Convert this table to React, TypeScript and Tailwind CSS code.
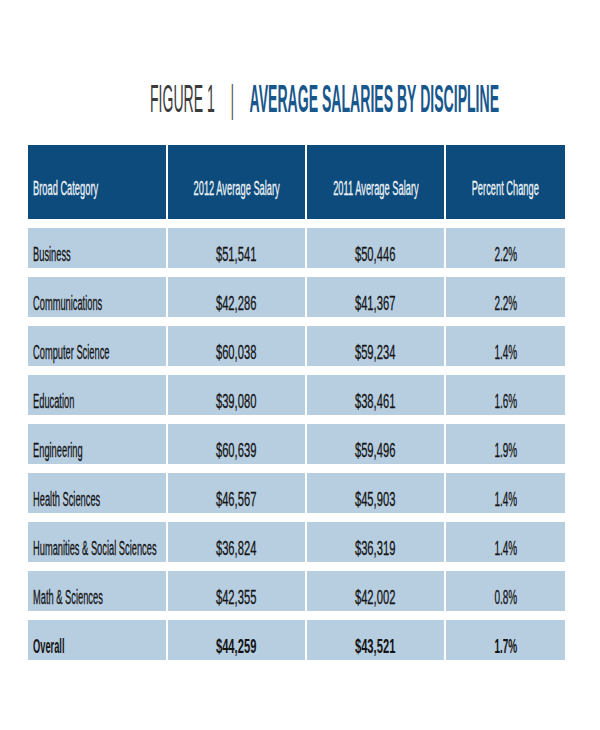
import React from 'react';

type Row = { category: string; y2012: string; y2011: string; change: string };

const rows: Row[] = [
  { category: 'Business', y2012: '$51,541', y2011: '$50,446', change: '2.2%' },
  { category: 'Communications', y2012: '$42,286', y2011: '$41,367', change: '2.2%' },
  { category: 'Computer Science', y2012: '$60,038', y2011: '$59,234', change: '1.4%' },
  { category: 'Education', y2012: '$39,080', y2011: '$38,461', change: '1.6%' },
  { category: 'Engineering', y2012: '$60,639', y2011: '$59,496', change: '1.9%' },
  { category: 'Health Sciences', y2012: '$46,567', y2011: '$45,903', change: '1.4%' },
  { category: 'Humanities & Social Sciences', y2012: '$36,824', y2011: '$36,319', change: '1.4%' },
  { category: 'Math & Sciences', y2012: '$42,355', y2011: '$42,002', change: '0.8%' },
];

const font = { fontFamily: '"Liberation Sans", Arial, sans-serif' };

function Cell({
  children,
  align = 'center',
  scale,
  header = false,
  bold = false,
}: {
  children: React.ReactNode;
  align?: 'left' | 'center';
  scale: 'text' | 'money' | 'pct';
  header?: boolean;
  bold?: boolean;
}) {
  const scaleCls =
    scale === 'text' ? 'scale-x-[0.465]' : scale === 'money' ? 'scale-x-[0.56]' : 'scale-x-[0.5]';
  return (
    <div
      className={`flex items-start ${header ? 'h-[74px] pt-[33px] bg-[#0c4b7b] text-[#eef3f8]' : 'h-[40px] pt-[16px] bg-[#b7cde0] text-[#141414]'} ${
        align === 'left' ? 'justify-start pl-[5px]' : 'justify-center'
      }`}
    >
      <span
        className={`inline-block whitespace-nowrap text-[20px] leading-[20px] ${scaleCls} ${
          align === 'left' ? 'origin-left' : 'origin-center'
        } ${bold ? 'font-bold' : 'font-normal [-webkit-text-stroke:0.3px_currentColor]'}`}
      >
        {children}
      </span>
    </div>
  );
}

export default function App() {
  return (
    <div className="w-[600px] h-[730px] bg-white overflow-hidden" style={font}>
      <div className="pt-[80px] pl-[150px] h-[145px]">
        <span className="inline-block whitespace-nowrap text-[38px] leading-[38px] scale-x-[0.37] origin-left">
          <span className="text-[#3b3b3b]">FIGURE 1</span>
          <span className="text-[#555555] ml-[42px] mr-[42px]">|</span>
          <span className="text-[#17578c] font-bold">AVERAGE SALARIES BY DISCIPLINE</span>
        </span>
      </div>

      <div className="ml-[28px] w-[537px] grid grid-cols-[138px_137px_137px_119px] gap-x-[2px] gap-y-[9px] bg-white">
        <Cell header align="left" scale="text">Broad Category</Cell>
        <Cell header scale="text">2012 Average Salary</Cell>
        <Cell header scale="text">2011 Average Salary</Cell>
        <Cell header scale="text">Percent Change</Cell>

        {rows.map((r) => (
          <React.Fragment key={r.category}>
            <Cell align="left" scale="text">{r.category}</Cell>
            <Cell scale="money">{r.y2012}</Cell>
            <Cell scale="money">{r.y2011}</Cell>
            <Cell scale="pct">{r.change}</Cell>
          </React.Fragment>
        ))}

        <Cell align="left" scale="text" bold>Overall</Cell>
        <Cell scale="money" bold>$44,259</Cell>
        <Cell scale="money" bold>$43,521</Cell>
        <Cell scale="pct" bold>1.7%</Cell>
      </div>
    </div>
  );
}
